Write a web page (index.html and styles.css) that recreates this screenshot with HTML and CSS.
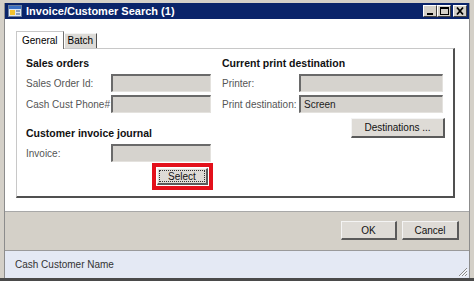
FILE: index.html
```html
<!DOCTYPE html>
<html lang="en">
<head>
    <meta charset="UTF-8">
    <title>Invoice/Customer Search (1)</title>
    <link rel="stylesheet" href="styles.css">
</head>
<body>

    <div class="window">
        <div class="frame">

            <div class="titlebar">
                <svg class="app-icon" width="15" height="14" viewBox="0 0 15 14">
                    <rect x="0.5" y="1.5" width="13" height="11" fill="#dfe6f0" stroke="#6b7f9e"/>
                    <rect x="1" y="2" width="12" height="3" fill="#3a6fc4"/>
                    <rect x="2" y="6" width="5" height="5" fill="#f2c230"/>
                    <rect x="8" y="6" width="4" height="2" fill="#8aa0c0"/>
                    <rect x="8" y="9" width="4" height="2" fill="#8aa0c0"/>
                </svg>
                <span class="title">Invoice/Customer Search (1)</span>
                <div class="win-buttons">
                    <div class="win-btn">
                        <svg width="12" height="10" viewBox="0 0 12 10"><rect x="3" y="7" width="6" height="2" fill="#000"/></svg>
                    </div>
                    <div class="win-btn">
                        <svg width="12" height="10" viewBox="0 0 12 10"><rect x="2.5" y="1.5" width="8" height="7" fill="none" stroke="#000"/><rect x="2" y="1" width="9" height="2" fill="#000"/></svg>
                    </div>
                    <div class="win-btn close">
                        <svg width="12" height="10" viewBox="0 0 12 10"><path d="M3 1.5 L9 8.5 M9 1.5 L3 8.5" stroke="#000" stroke-width="1.8"/></svg>
                    </div>
                </div>
            </div>

            <div class="content">
                <div class="tabs">
                    <div class="tab active">General</div>
                    <div class="tab">Batch</div>
                </div>

                <div class="panel">
                    <div class="col left-col">
                        <div class="group-title">Sales orders</div>
                        <div class="field">
                            <label>Sales Order Id:</label>
                            <div class="input"></div>
                        </div>
                        <div class="field">
                            <label>Cash Cust Phone#</label>
                            <div class="input"></div>
                        </div>

                        <div class="group-title second">Customer invoice journal</div>
                        <div class="field">
                            <label>Invoice:</label>
                            <div class="input"></div>
                        </div>
                        <div class="highlight">
                            <button class="btn select-btn"><span>Select</span></button>
                        </div>
                    </div>

                    <div class="col right-col">
                        <div class="group-title">Current print destination</div>
                        <div class="field">
                            <label>Printer:</label>
                            <div class="input"></div>
                        </div>
                        <div class="field">
                            <label>Print destination:</label>
                            <div class="input">Screen</div>
                        </div>
                        <button class="btn dest-btn">Destinations ...</button>
                    </div>
                </div>
            </div>

            <div class="footer">
                <button class="btn ok-btn">OK</button>
                <button class="btn cancel-btn">Cancel</button>
            </div>

            <div class="statusbar">
                <span>Cash Customer Name</span>
                <svg class="grip" width="11" height="11" viewBox="0 0 11 11">
                    <path d="M10 2 L2 10 M10 5 L5 10 M10 8 L8 10" stroke="#8a8a8a" stroke-width="1"/>
                    <path d="M10.5 3 L3 10.5 M10.5 6 L6 10.5 M10.5 9 L9 10.5" stroke="#fff" stroke-width="1"/>
                </svg>
            </div>

        </div>
    </div>

</body>
</html>
```

FILE: styles.css
```css
* {
    box-sizing: border-box;
}

body {
    margin: 0;
    font-family: 'Liberation Sans', Arial, sans-serif;
    font-size: 10px;
    color: #000;
}

.window {
    width: 474px;
    height: 281px;
    padding: 3px 4px 0 4px;
    background-color: #d4d0c8;
    border-bottom: 3px solid #4a4a4a;
}

.frame {
    border-left: 1px solid #8c8c8c;
    border-right: 1px solid #8c8c8c;
}

/* title bar */
.titlebar {
    height: 16px;
    background-color: #0a246a;
    display: flex;
    align-items: center;
    padding: 0 2px;
}

.app-icon {
    margin-left: 1px;
}

.title {
    color: #fff;
    font-weight: bold;
    font-size: 11px;
    margin-left: 3px;
}

.win-buttons {
    margin-left: auto;
    display: flex;
}

.win-btn {
    width: 14px;
    height: 12px;
    background-color: #d4d0c8;
    border-top: 1px solid #fff;
    border-left: 1px solid #fff;
    border-right: 1px solid #404040;
    border-bottom: 1px solid #404040;
    display: flex;
    align-items: center;
    justify-content: center;
}

.win-btn.close {
    margin-left: 2px;
}

/* main area */
.content {
    height: 192px;
    background-color: #fff;
    padding: 12px 0 0 11px;
}

.tabs {
    display: flex;
    height: 17px;
    align-items: flex-end;
}

.tab {
    height: 15px;
    padding: 0 3px;
    line-height: 14px;
    background-color: #dcdad6;
    border-top: 1px solid #f4f4f4;
    border-left: 1px solid #fff;
    border-right: 1px solid #505050;
    white-space: nowrap;
}

.tab.active {
    height: 18px;
    margin-bottom: -1px;
    padding: 0 5px;
    line-height: 18px;
    background-color: #fff;
    border-top: 1px solid #c8c8c8;
    border-left: 1px solid #c8c8c8;
    border-right: 1px solid #707070;
    position: relative;
}

.panel {
    width: 439px;
    height: 150px;
    border-top: 1px solid #c8c8c8;
    border-left: 1px solid #c8c8c8;
    border-right: 2px solid #505050;
    border-bottom: 2px solid #505050;
    display: flex;
    padding: 7px 0 0 9px;
}

.col {
    display: flex;
    flex-direction: column;
}

.left-col {
    width: 185px;
}

.right-col {
    width: 223px;
    margin-left: 11px;
}

.group-title {
    font-weight: bold;
    font-size: 10.5px;
    line-height: 14px;
    color: #111;
    white-space: nowrap;
}

.group-title.second {
    margin-top: 13px;
}

.field {
    display: flex;
    align-items: center;
    margin-top: 3px;
    height: 18px;
}

.group-title + .field {
    margin-top: 4px;
}

.field label {
    color: #555;
    width: 85px;
    white-space: nowrap;
}

.right-col .field label {
    width: 77px;
}

.input {
    width: 100px;
    height: 18px;
    background-color: #d6d3ce;
    border-top: 2px solid #6a6a6a;
    border-left: 2px solid #6a6a6a;
    border-right: 1px solid #e4e2de;
    border-bottom: 1px solid #e4e2de;
    padding-left: 3px;
    line-height: 15px;
    color: #222;
}

.right-col .input {
    width: 144px;
}

.btn {
    font-family: inherit;
    font-size: 10px;
    color: #111;
    background-color: #dedbd6;
    border-top: 1px solid #f4f4f4;
    border-left: 1px solid #f4f4f4;
    border-right: 2px solid #5a5a5a;
    border-bottom: 2px solid #5a5a5a;
    padding: 0;
}

.dest-btn {
    align-self: flex-end;
    width: 94px;
    height: 20px;
    margin-top: 5px;
}

.highlight {
    margin: 1px 0 0 126px;
    width: 61px;
    height: 27px;
    border: 4px solid #e3101b;
    padding: 1px;
    background-color: #fff;
}

.select-btn {
    width: 51px;
    height: 17px;
    padding: 1px;
    display: block;
}

.select-btn span {
    display: block;
    height: 100%;
    line-height: 12px;
    border: 1px dotted #333;
}

/* buttons bar */
.footer {
    height: 39px;
    border-top: 1px solid #a8a8a8;
    display: flex;
    justify-content: flex-end;
    padding: 9px 10px 0 0;
    gap: 5px;
}

.ok-btn {
    width: 56px;
    height: 19px;
}

.cancel-btn {
    width: 57px;
    height: 19px;
}

/* status bar */
.statusbar {
    height: 28px;
    border-top: 1px solid #9a9a9a;
    background-color: #e4e9f4;
    display: flex;
    align-items: center;
    padding-left: 10px;
    color: #333;
}

.grip {
    margin-left: auto;
    margin-right: 1px;
    align-self: flex-end;
    margin-bottom: 1px;
}
```
